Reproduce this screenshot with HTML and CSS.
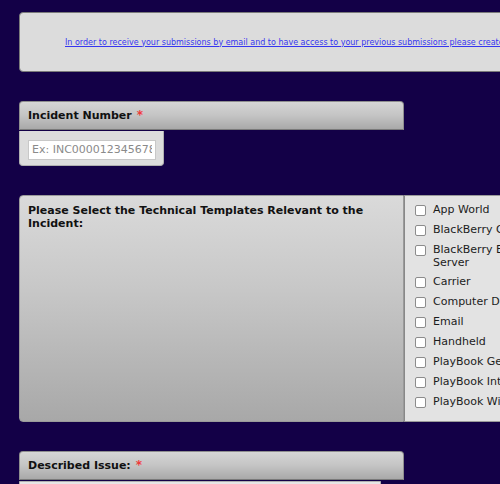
FILE: index.html
```html
<!DOCTYPE html>
<html>
<head>
<meta charset="utf-8">
<link rel="stylesheet" href="styles.css">
</head>
<body>
<div class="page">
  <div class="banner">
    <a class="banner-link" href="#">In order to receive your submissions by email and to have access to your previous submissions please create a free account and log in.</a>
  </div>

  <div class="section">
    <div class="header"><span class="label">Incident Number</span><span class="req">*</span></div>
    <div class="input-box">
      <input class="text-input" type="text" placeholder="Ex: INC000012345678">
    </div>
  </div>

  <div class="section templates">
    <div class="templates-left">
      <span class="label block">Please Select the Technical Templates Relevant to the Incident:</span>
    </div>
    <div class="templates-right">
      <label class="opt"><span class="box"></span><span class="opt-text">App World</span></label>
      <label class="opt"><span class="box"></span><span class="opt-text">BlackBerry Connect</span></label>
      <label class="opt"><span class="box"></span><span class="opt-text">BlackBerry Enterprise Server</span></label>
      <label class="opt"><span class="box"></span><span class="opt-text">Carrier</span></label>
      <label class="opt"><span class="box"></span><span class="opt-text">Computer Desktop</span></label>
      <label class="opt"><span class="box"></span><span class="opt-text">Email</span></label>
      <label class="opt"><span class="box"></span><span class="opt-text">Handheld</span></label>
      <label class="opt"><span class="box"></span><span class="opt-text">PlayBook General</span></label>
      <label class="opt"><span class="box"></span><span class="opt-text">PlayBook Internet</span></label>
      <label class="opt"><span class="box"></span><span class="opt-text">PlayBook Wi-Fi</span></label>
    </div>
  </div>

  <div class="section">
    <div class="header"><span class="label">Described Issue:</span><span class="req">*</span></div>
    <div class="area-box"></div>
  </div>
</div>
</body>
</html>
```

FILE: styles.css
```css
html, body {
  margin: 0;
  padding: 0;
  background: #130047;
  overflow: hidden;
  height: 484px;
}
.page {
  width: 720px;
  padding: 12px 0 0 19px;
  display: flex;
  flex-direction: column;
  font-family: "DejaVu Sans", Verdana, sans-serif;
  color: #1a1a1a;
}
.banner {
  height: 58px;
  border: 1px solid #7a7a7a;
  border-radius: 4px;
  background: #dcdcdc;
  display: flex;
  align-items: center;
  padding-left: 45px;
}
.banner-link {
  font-size: 8px;
  color: #3636f0;
  text-decoration: underline;
  white-space: nowrap;
}
.section {
  margin-top: 29px;
  display: flex;
  flex-direction: column;
  align-items: flex-start;
}
.header {
  width: 375px;
  height: 27px;
  padding-left: 8px;
  border: 1px solid #8e8e8e;
  border-bottom-color: #7a7a7a;
  border-radius: 4px 4px 0 0;
  background: linear-gradient(#d6d6d6, #c4c4c4 50%, #a9a9a9);
  display: flex;
  align-items: center;
}
.label {
  font-weight: bold;
  font-size: 11px;
  line-height: 13px;
  color: #111;
}
.block {
  display: block;
}
.req {
  color: #f03a3a;
  font-weight: bold;
  font-size: 12px;
  margin-left: 5px;
  line-height: 13px;
}
.input-box {
  margin-top: 1px;
  width: 127px;
  height: 19px;
  padding: 7px 8px 8px 8px;
  background: #dcdcdc;
  border: 1px solid #b0b0b0;
  border-top: none;
  border-radius: 0 0 4px 4px;
}
.text-input {
  box-sizing: border-box;
  width: 128px;
  height: 20px;
  margin: 0;
  padding: 0 3px;
  border: 1px solid #c8c8c8;
  background: #fff;
  font-family: "DejaVu Sans", Verdana, sans-serif;
  font-size: 11px;
  color: #333;
  outline: none;
}
.text-input::placeholder {
  color: #8a8a8a;
}
.templates {
  flex-direction: row;
  align-items: stretch;
}
.templates-left {
  width: 367px;
  height: 209px;
  padding: 8px 8px 8px 8px;
  border: 1px solid #9a9a9a;
  border-radius: 4px 0 0 4px;
  background: linear-gradient(#dadada, #c8c8c8 40%, #a8a8a8);
}
.templates-right {
  width: 170px;
  padding: 6px 0 0 10px;
  border: 1px solid #9a9a9a;
  border-left-color: #888;
  background: #e3e3e3;
  display: flex;
  flex-direction: column;
  gap: 5px;
}
.opt {
  display: flex;
  align-items: flex-start;
  gap: 7px;
  min-height: 15px;
}
.box {
  flex: none;
  width: 9px;
  height: 9px;
  margin-top: 3px;
  border: 1px solid #8c8c8c;
  border-radius: 2px;
  background: #fff;
}
.opt-text {
  width: 130px;
  font-size: 11px;
  line-height: 13px;
  padding-top: 1px;
  color: #1c1c1c;
}
.area-box {
  margin-top: 1px;
  width: 360px;
  height: 40px;
  background: #e6e6e6;
  border: 1px solid #b0b0b0;
  border-radius: 0 0 4px 4px;
}
```
